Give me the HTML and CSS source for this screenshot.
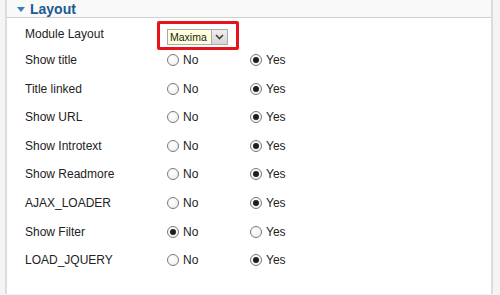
FILE: index.html
```html
<!DOCTYPE html>
<html lang="en">
<head>
  <meta charset="UTF-8">
  <title>Layout</title>
  <link rel="stylesheet" href="styles.css">
</head>
<body>
  <div class="panel">
    <div class="panel-head">
      <span class="arrow"></span>
      <span class="panel-title">Layout</span>
    </div>

    <div class="fields">
      <div class="row row-select">
        <span class="label">Module Layout</span>
        <div class="highlight">
          <div class="select">
            <span class="select-value">Maxima</span>
            <span class="select-btn">
              <svg width="9" height="6" viewBox="0 0 9 6"><path d="M1 1 L4.5 4.5 L8 1" fill="none" stroke="#444" stroke-width="1.6"/></svg>
            </span>
          </div>
        </div>
      </div>

      <div class="row">
        <span class="label">Show title</span>
        <span class="opt"><span class="radio"></span>No</span>
        <span class="opt"><span class="radio checked"></span>Yes</span>
      </div>
      <div class="row">
        <span class="label">Title linked</span>
        <span class="opt"><span class="radio"></span>No</span>
        <span class="opt"><span class="radio checked"></span>Yes</span>
      </div>
      <div class="row">
        <span class="label">Show URL</span>
        <span class="opt"><span class="radio"></span>No</span>
        <span class="opt"><span class="radio checked"></span>Yes</span>
      </div>
      <div class="row">
        <span class="label">Show Introtext</span>
        <span class="opt"><span class="radio"></span>No</span>
        <span class="opt"><span class="radio checked"></span>Yes</span>
      </div>
      <div class="row">
        <span class="label">Show Readmore</span>
        <span class="opt"><span class="radio"></span>No</span>
        <span class="opt"><span class="radio checked"></span>Yes</span>
      </div>
      <div class="row">
        <span class="label">AJAX_LOADER</span>
        <span class="opt"><span class="radio"></span>No</span>
        <span class="opt"><span class="radio checked"></span>Yes</span>
      </div>
      <div class="row">
        <span class="label">Show Filter</span>
        <span class="opt"><span class="radio checked"></span>No</span>
        <span class="opt"><span class="radio"></span>Yes</span>
      </div>
      <div class="row">
        <span class="label">LOAD_JQUERY</span>
        <span class="opt"><span class="radio"></span>No</span>
        <span class="opt"><span class="radio checked"></span>Yes</span>
      </div>
    </div>
  </div>
</body>
</html>
```

FILE: styles.css
```css
body {
  margin: 0;
  background: #f4f4f4;
  font-family: "Liberation Sans", Arial, sans-serif;
  font-size: 12px;
  color: #222;
}
.panel {
  margin-left: 5px;
  width: 484px;
  height: 294px;
  background: #fff;
  border-left: 2px solid #dcdcdc;
  border-right: 2px solid #dcdcdc;
}
.panel-head {
  height: 17px;
  background: #f9f9f9;
  border-bottom: 1px solid #cfcfcf;
  display: flex;
  align-items: center;
  padding-left: 10px;
}
.arrow {
  width: 0;
  height: 0;
  border-left: 4px solid transparent;
  border-right: 4px solid transparent;
  border-top: 5px solid #2d7fc1;
  margin-right: 5px;
  margin-top: 1px;
}
.panel-title {
  font-weight: bold;
  font-size: 14px;
  color: #1b5a91;
}
.fields {
  padding: 4px 0 0 18px;
}
.row {
  display: flex;
  align-items: center;
  height: 28.6px;
}
.row-select {
  height: 23.7px;
  align-items: flex-start;
}
.label {
  width: 142px;
  line-height: 14px;
}
.row-select .label {
  width: 132px;
  padding-top: 5px;
}
.highlight {
  box-sizing: border-box;
  width: 82px;
  height: 29px;
  border: 3px solid #e8141b;
  border-radius: 2px;
  padding: 5px 0 0 7px;
  margin-top: -1px;
}
.select {
  display: flex;
  width: 61px;
  height: 16px;
  box-sizing: border-box;
  border: 1px solid #a9a9a9;
  background: #ffffdb;
}
.select-value {
  flex: 1;
  font-size: 10.5px;
  line-height: 14px;
  padding-left: 2px;
  color: #222;
}
.select-btn {
  width: 15px;
  display: flex;
  align-items: center;
  justify-content: center;
  background: linear-gradient(#eee, #d6d6d6);
  border-left: 1px solid #a9a9a9;
}
.opt {
  display: flex;
  align-items: center;
  width: 83px;
  line-height: 14px;
}
.radio {
  box-sizing: border-box;
  width: 12px;
  height: 12px;
  border: 1px solid #7a7a7a;
  border-radius: 50%;
  background: radial-gradient(circle at 40% 35%, #fff, #ececec);
  margin-right: 4px;
  display: flex;
  align-items: center;
  justify-content: center;
}
.radio.checked::after {
  content: "";
  width: 6px;
  height: 6px;
  border-radius: 50%;
  background: #1e1e1e;
}
```
